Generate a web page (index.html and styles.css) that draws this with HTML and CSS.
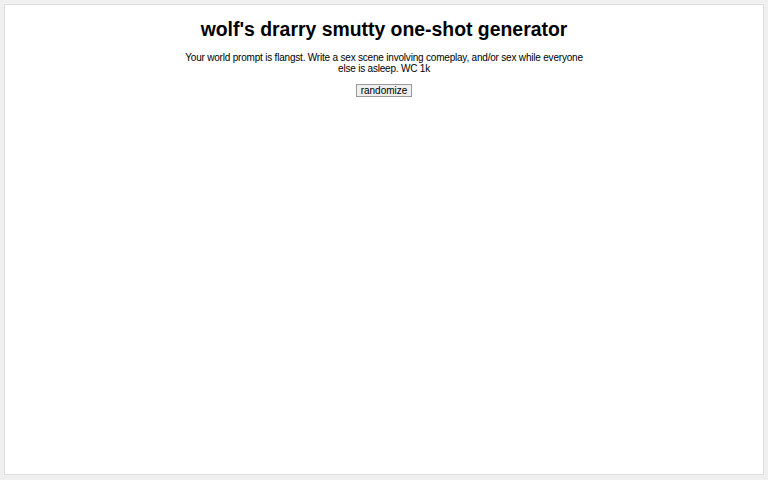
FILE: index.html
```html
<!DOCTYPE html>
<html lang="en">
<head>
    <meta charset="UTF-8">
    <title>wolf's drarry smutty one-shot generator</title>
    <link rel="stylesheet" href="styles.css">
</head>
<body>
    <div class="page">
        <h1>wolf's drarry smutty one-shot generator</h1>
        <p id="prompt" class="prompt">Your world prompt is flangst. Write a sex scene involving comeplay, and/or sex while everyone else is asleep. WC 1k</p>
        <button id="randomize-btn" class="randomize">randomize</button>
    </div>
</body>
</html>
```

FILE: styles.css
```css
html, body {
    height: 100%;
}
body {
    margin: 0;
    padding: 4px 4px 5px 4px;
    box-sizing: border-box;
    background-color: #f0f0f0;
    font-family: "Liberation Sans", Arial, sans-serif;
}
.page {
    height: 100%;
    box-sizing: border-box;
    background-color: #fff;
    border: 1px solid #dcdcdc;
    display: flex;
    flex-direction: column;
    align-items: center;
    text-align: center;
}
h1 {
    font-size: 19.4px;
    margin: 13px 0 0 0;
    color: #000;
}
.prompt {
    font-size: 10px;
    width: 410px;
    margin: 11px 0 0 0;
    line-height: 11px;
    letter-spacing: -0.2px;
}
.randomize {
    font-family: "Liberation Sans", Arial, sans-serif;
    font-size: 10px;
    line-height: 11px;
    margin-top: 10px;
    padding: 0 4px;
    background-color: #efefef;
    border: 1px solid #999;
    border-radius: 0;
}
```
